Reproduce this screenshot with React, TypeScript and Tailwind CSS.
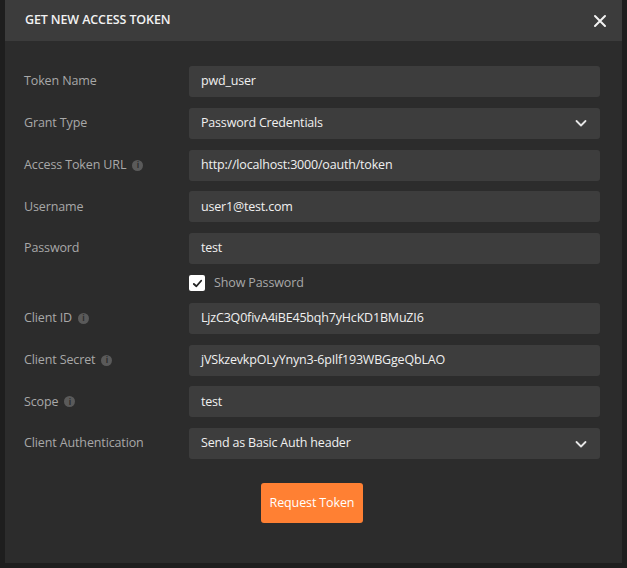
const Info = () => (
  <span className="ml-1.5 inline-flex h-[11px] w-[11px] items-center justify-center rounded-full bg-[#5a5a5a] text-[8px] font-bold leading-none text-[#2c2c2c]">i</span>
);

const Chevron = () => (
  <svg width="14" height="14" viewBox="0 0 14 14" fill="none" stroke="#e6e6e6" strokeWidth="1.8" strokeLinecap="round" strokeLinejoin="round">
    <path d="M2.5 5 L7 9.5 L11.5 5" />
  </svg>
);

type Row = { label: string; value: string; info?: boolean; select?: boolean };

const rowsTop: Row[] = [
  { label: 'Token Name', value: 'pwd_user' },
  { label: 'Grant Type', value: 'Password Credentials', select: true },
  { label: 'Access Token URL', value: 'http://localhost:3000/oauth/token', info: true },
  { label: 'Username', value: 'user1@test.com' },
  { label: 'Password', value: 'test' },
];

const rowsBottom: Row[] = [
  { label: 'Client ID', value: 'LjzC3Q0fivA4iBE45bqh7yHcKD1BMuZI6', info: true },
  { label: 'Client Secret', value: 'jVSkzevkpOLyYnyn3-6pIlf193WBGgeQbLAO', info: true },
  { label: 'Scope', value: 'test', info: true },
  { label: 'Client Authentication', value: 'Send as Basic Auth header', select: true },
];

function FieldRow({ row }: { row: Row }) {
  return (
    <div className="flex h-[31px] items-center">
      <div className="flex w-[165px] items-center text-[12.5px] tracking-[-0.01em] text-[#a8a8a8]">
        {row.label}
        {row.info && <Info />}
      </div>
      <div className="flex h-[31px] flex-1 items-center justify-between rounded-[3px] bg-[#3d3d3d] px-3 text-[12.5px] tracking-[-0.015em] text-[#f0f0f0]">
        <span>{row.value}</span>
        {row.select && <Chevron />}
      </div>
    </div>
  );
}

export default function App() {
  return (
    <div className="h-[568px] w-[627px] overflow-hidden bg-[#1e1e1e] pl-[5px] pr-[5px]" style={{ fontFamily: '"Open Sans", sans-serif' }}>
      <div className="h-[563px] bg-[#2c2c2c]">
        <div className="flex h-[41px] items-center justify-between bg-[#3c3c3c] pl-[20px] pr-[15px]">
          <span className="text-[12.5px] font-semibold tracking-[-0.01em] text-[#f2f2f2]">GET NEW ACCESS TOKEN</span>
          <svg width="14" height="14" viewBox="0 0 14 14" stroke="#f2f2f2" strokeWidth="2" strokeLinecap="round">
            <path d="M2 2 L12 12 M12 2 L2 12" />
          </svg>
        </div>
        <div className="flex flex-col gap-[10.8px] pl-[19px] pr-[22px] pt-[25px]">
          {rowsTop.map((r) => (
            <FieldRow key={r.label} row={r} />
          ))}
          <div className="flex h-[17px] items-center pl-[165px]">
            <span className="flex h-[16px] w-[16px] items-center justify-center rounded-[2px] bg-white">
              <svg width="11" height="11" viewBox="0 0 12 12" fill="none" stroke="#222" strokeWidth="2" strokeLinecap="round" strokeLinejoin="round">
                <path d="M2 6.5 L4.8 9 L10 3" />
              </svg>
            </span>
            <span className="ml-[9px] text-[12.5px] tracking-[-0.01em] text-[#a8a8a8]">Show Password</span>
          </div>
          {rowsBottom.map((r) => (
            <FieldRow key={r.label} row={r} />
          ))}
          <div className="flex justify-center pt-[13px]">
            <button className="h-[40px] w-[102px] rounded-[3px] bg-[#ff8033] text-[12.5px] font-medium tracking-[-0.01em] text-white">
              Request Token
            </button>
          </div>
        </div>
      </div>
    </div>
  );
}
